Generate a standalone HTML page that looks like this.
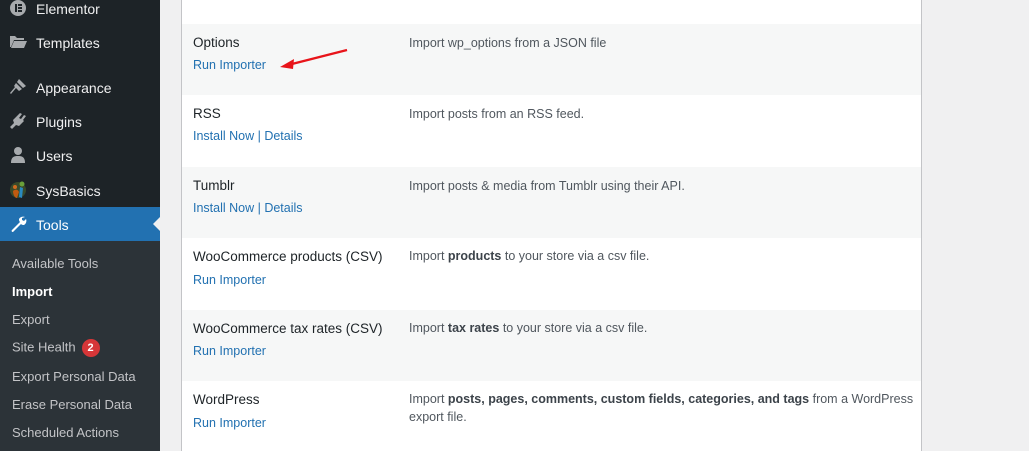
<!DOCTYPE html>
<html><head><meta charset="utf-8"><style>
*{margin:0;padding:0;box-sizing:border-box}
body{width:1029px;height:451px;overflow:hidden;background:#f0f0f1;font-family:"Liberation Sans",sans-serif;position:relative}
#side{position:absolute;left:0;top:0;width:160px;height:451px;background:#1d2327}
.m{position:absolute;left:36px;color:#f0f0f1;font-size:14px}
.ic{position:absolute;left:9px;width:18px;height:18px}
#tools{position:absolute;left:0;top:207px;width:160px;height:34px;background:#2271b1}
#tools:after{content:"";position:absolute;right:0;top:10px;border:7px solid transparent;border-right-color:#f0f0f1;border-left:0}
#sub{position:absolute;left:0;top:241px;width:160px;height:210px;background:#2c3338}
.s{position:absolute;left:12px;color:#c3c4c7;font-size:13px}
.badge{display:inline-block;background:#d63638;color:#fff;border-radius:9px;width:18px;height:18px;font-size:11px;text-align:center;line-height:18px;font-weight:bold;margin-left:6px;vertical-align:middle}
#tbl{position:absolute;left:181px;top:0;width:741px;height:451px;background:#fff;border-left:1px solid #c3c4c7;border-right:1px solid #c3c4c7}
.r{position:absolute;left:0;width:739px}
.alt{background:#f6f7f7}
.n{position:absolute;left:11px;color:#1d2327;font-size:13.5px}
.a{position:absolute;left:11px;color:#2271b1;font-size:12.5px}
.d{position:absolute;left:227px;color:#50575e;font-size:12.5px;width:510px;line-height:18px;white-space:nowrap}
.d b{color:#3c434a}
</style></head><body>
<div id="side">
 <svg class="ic" style="top:0" viewBox="0 0 18 18"><circle cx="9" cy="8" r="8" fill="#a7aaad"/><rect x="6" y="4" width="2" height="8" fill="#1d2327"/><rect x="9" y="4" width="4" height="2" fill="#1d2327"/><rect x="9" y="7" width="4" height="2" fill="#1d2327"/><rect x="9" y="10" width="4" height="2" fill="#1d2327"/></svg>
 <div class="m" style="top:1px">Elementor</div>
 <svg class="ic" style="top:33px" viewBox="0 0 18 18"><path d="M1 3h5l2 2h7v2H5L2 14H1z M5 8h13l-3 7H2z" fill="#a7aaad"/></svg>
 <div class="m" style="top:35px">Templates</div>
 <svg class="ic" style="top:78px" viewBox="0 0 18 18"><path d="M10 1l7 7-3 2-6-6z M7 5l6 6-3 2-3-3-5 6-1-1 5-6-1-1z" fill="#a7aaad"/></svg>
 <div class="m" style="top:80px">Appearance</div>
 <svg class="ic" style="top:112px" viewBox="0 0 18 18"><path d="M11 1l2 1-3 4 2 1 3-4 2 1-3 4 1 1-5 5-3-1-4 4-2-2 4-4-1-3 5-5z" fill="#a7aaad"/></svg>
 <div class="m" style="top:114px">Plugins</div>
 <svg class="ic" style="top:146px" viewBox="0 0 18 18"><circle cx="9" cy="5" r="4" fill="#a7aaad"/><path d="M2 17c0-6 3-7 7-7s7 1 7 7z" fill="#a7aaad"/></svg>
 <div class="m" style="top:148px">Users</div>
 <svg class="ic" style="top:181px" viewBox="0 0 18 18"><circle cx="9" cy="9" r="8" fill="#3a4a2a"/><circle cx="13" cy="3" r="2.5" fill="#6aa03a"/><circle cx="6" cy="6" r="2" fill="#d06a20"/><path d="M4 10c2-2 5-2 6 1l-2 6c-2 0-4-3-4-7z" fill="#c05a10"/><path d="M11 6l3 1-1 10-3-1z" fill="#2a8ac0"/></svg>
 <div class="m" style="top:183px">SysBasics</div>
 <div id="tools"><svg class="ic" style="top:8px" viewBox="0 0 18 18"><path d="M16 2c-2-1-5 0-6 2 0 1 0 2 1 3l-8 8c-1 1 0 2 1 2l8-8c1 1 2 1 3 1 2-1 3-4 2-6l-2 2-2-1 0-2z" fill="#fff"/></svg><div class="m" style="top:10px;color:#fff">Tools</div></div>
</div>
<div id="sub">
 <div class="s" style="top:15px">Available Tools</div>
 <div class="s" style="top:43px;color:#fff;font-weight:bold">Import</div>
 <div class="s" style="top:71px">Export</div>
 <div class="s" style="top:98px">Site Health<span class="badge">2</span></div>
 <div class="s" style="top:128px">Export Personal Data</div>
 <div class="s" style="top:156px">Erase Personal Data</div>
 <div class="s" style="top:184px">Scheduled Actions</div>
</div>
<div id="tbl">
 <div class="r alt" style="top:24px;height:71px"><div class="n" style="top:11px">Options</div><div class="a" style="top:34px">Run Importer</div><div class="d" style="top:10px">Import wp_options from a JSON file</div></div>
 <div class="r" style="top:95px;height:72px"><div class="n" style="top:11px">RSS</div><div class="a" style="top:34px">Install Now | Details</div><div class="d" style="top:10px">Import posts from an RSS feed.</div></div>
 <div class="r alt" style="top:167px;height:71px"><div class="n" style="top:11px">Tumblr</div><div class="a" style="top:34px">Install Now | Details</div><div class="d" style="top:10px">Import posts &amp; media from Tumblr using their API.</div></div>
 <div class="r" style="top:238px;height:72px"><div class="n" style="top:11px">WooCommerce products (CSV)</div><div class="a" style="top:35px">Run Importer</div><div class="d" style="top:9px">Import <b>products</b> to your store via a csv file.</div></div>
 <div class="r alt" style="top:310px;height:71px"><div class="n" style="top:11px">WooCommerce tax rates (CSV)</div><div class="a" style="top:34px">Run Importer</div><div class="d" style="top:9px">Import <b>tax rates</b> to your store via a csv file.</div></div>
 <div class="r" style="top:381px;height:70px"><div class="n" style="top:11px">WordPress</div><div class="a" style="top:35px">Run Importer</div><div class="d" style="top:9px">Import <b>posts, pages, comments, custom fields, categories, and tags</b> from a WordPress<br>export file.</div></div>
</div>
<svg style="position:absolute;left:270px;top:40px" width="90" height="40" viewBox="0 0 90 40"><path d="M77 10L18 25" stroke="#e8141a" stroke-width="2.2"/><path d="M10 27l14-8 -1 10z" fill="#e8141a"/></svg>
</body></html>
